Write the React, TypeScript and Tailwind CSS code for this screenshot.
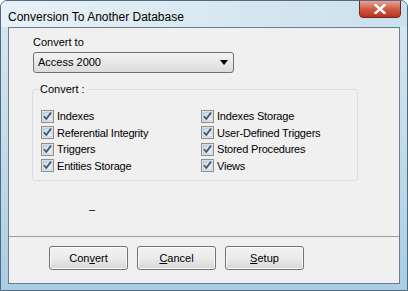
import React from "react";

const Check = () => (
  <svg width="13" height="13" viewBox="0 0 13 13" className="shrink-0">
    <defs>
      <linearGradient id="cbg" x1="0" y1="0" x2="1" y2="1">
        <stop offset="0" stopColor="#c9d3db" />
        <stop offset="1" stopColor="#f4f6f8" />
      </linearGradient>
    </defs>
    <rect x="0.5" y="0.5" width="12" height="12" fill="#f2f2f2" stroke="#8f8f8f" />
    <rect x="2" y="2" width="9" height="9" fill="url(#cbg)" stroke="#a9b3bc" strokeWidth="0.6" />
    <path d="M3 6.2 L5.3 9 L10 2.6" fill="none" stroke="#3a5a7a" strokeWidth="1.8" strokeLinejoin="round" />
  </svg>
);

const Item = ({ label }: { label: string }) => (
  <div className="flex items-center gap-[3px] h-[16.5px]">
    <Check />
    <span className="tracking-[-0.2px]">{label}</span>
  </div>
);

const Btn = ({ children }: { children: React.ReactNode }) => (
  <button className="w-[79px] h-[24px] rounded-[3px] border border-[#707070] bg-gradient-to-b from-[#f2f2f2] via-[#ebebeb] to-[#d6d6d6] text-[11px] text-black shadow-[inset_0_0_0_1px_#fcfcfc]">
    {children}
  </button>
);

export default function App() {
  return (
    <div
      className="w-[408px] h-[291px] overflow-hidden flex flex-col rounded-t-[7px] border border-[#4d6b82] bg-gradient-to-b from-[#d8e8f2] via-[#c4dbe9] to-[#a9cde2]"
      style={{ fontFamily: '"Liberation Sans", Arial, sans-serif' }}
    >
      <div className="h-[26px] flex items-start justify-between pl-[7px] pr-[6px] bg-gradient-to-r from-[#e8f1f7] via-[#d9e8f1] to-[#cbe0ed]">
        <span className="text-[12px] text-black mt-[7px]">Conversion To Another Database</span>
        <div className="w-[42px] h-[18px] -mt-[1px] rounded-b-[4px] border border-[#6b2a22] bg-gradient-to-b from-[#e8a493] via-[#cf5a43] to-[#b8321c] flex items-center justify-center">
          <svg width="12" height="10" viewBox="0 0 12 10">
            <path d="M1.5 1 L10.5 9 M10.5 1 L1.5 9" stroke="#fff" strokeWidth="2.4" strokeLinecap="square" />
          </svg>
        </div>
      </div>
      <div className="mx-[7px] h-[257px] border border-[#6b7d8c] bg-[#f0f0f0] flex flex-col text-[11px] text-black">
        <div className="pl-[24px] pt-[8px]">
          <div className="leading-[13px]">Convert to</div>
          <div className="mt-[3px] w-[201px] h-[21px] rounded-[3px] border border-[#707070] bg-gradient-to-b from-[#f4f4f4] to-[#dcdcdc] flex items-center justify-between pl-[4px] pr-[5px]">
            <span>Access 2000</span>
            <svg width="8" height="5" viewBox="0 0 8 5">
              <path d="M0 0 H8 L4 5 Z" fill="#000" />
            </svg>
          </div>
        </div>
        <fieldset className="ml-[23px] mt-[10px] w-[326px] h-[98px] border border-[#d5dfe5] rounded-[3px] px-[8px] pt-[12px]">
          <legend className="px-[2px] ml-[-3px] leading-[13px]">Convert :</legend>
          <div className="grid grid-cols-[160px_1fr]">
            <div className="flex flex-col">
              <Item label="Indexes" />
              <Item label="Referential Integrity" />
              <Item label="Triggers" />
              <Item label="Entities Storage" />
            </div>
            <div className="flex flex-col">
              <Item label="Indexes Storage" />
              <Item label="User-Defined Triggers" />
              <Item label="Stored Procedures" />
              <Item label="Views" />
            </div>
          </div>
        </fieldset>
        <div className="pl-[80px] mt-[22px] leading-[13px]">–</div>
        <div className="mt-[20px] border-t border-[#a0a0a0]" />
        <div className="flex gap-[9px] pl-[40px] mt-[9px]">
          <Btn>Con<u>v</u>ert</Btn>
          <Btn><u>C</u>ancel</Btn>
          <Btn><u>S</u>etup</Btn>
        </div>
      </div>
    </div>
  );
}
